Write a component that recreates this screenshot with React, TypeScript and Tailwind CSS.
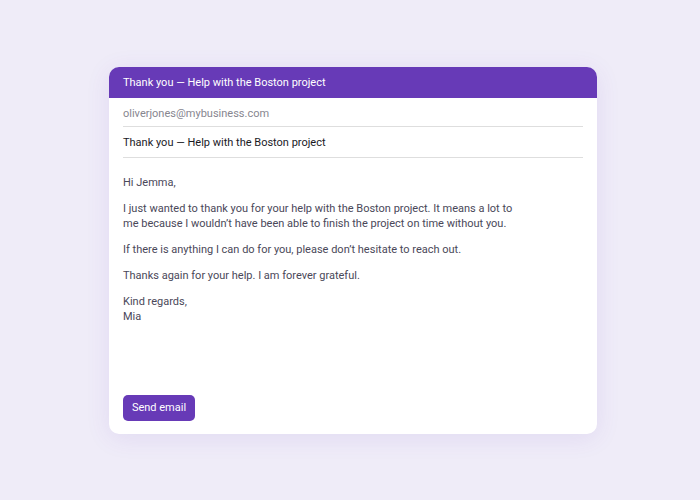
import React from 'react';

const paragraphs = [
  'Hi Jemma,',
  'I just wanted to thank you for your help with the Boston project. It means a lot to\nme because I wouldn\u2019t have been able to finish the project on time without you.',
  'If there is anything I can do for you, please don\u2019t hesitate to reach out.',
  'Thanks again for your help. I am forever grateful.',
  'Kind regards,\nMia',
];

export default function App() {
  return (
    <div
      className="flex h-[500px] w-[700px] items-start justify-center bg-[#efecf8] pt-[67px]"
      style={{ fontFamily: 'Roboto, "Noto Sans", sans-serif' }}
    >
      <div className="ml-[6px] flex h-[367px] w-[488px] flex-col overflow-hidden rounded-[10px] bg-white shadow-[0_4px_24px_rgba(103,58,183,0.10)]">
        <div className="flex h-[31px] items-center bg-[#673ab7] px-[14px] pt-[1px] text-[11px] text-white">
          Thank you — Help with the Boston project
        </div>
        <div className="flex flex-1 flex-col px-[14px] pb-[13px]">
          <div className="h-[29px] border-b border-[#dedede] pt-[8px] text-[11px] leading-[15px] text-[#87868f]">
            oliverjones@mybusiness.com
          </div>
          <div className="h-[31px] border-b border-[#dedede] pt-[8px] text-[11px] leading-[15px] text-[#1a1a1f]">
            Thank you — Help with the Boston project
          </div>
          <div className="flex flex-1 flex-col gap-[11px] pt-[17px] text-[11px] leading-[15px] text-[#4a4859]">
            {paragraphs.map((p, i) => (
              <p key={i} className="whitespace-pre-line">
                {p}
              </p>
            ))}
          </div>
          <div>
            <button className="h-[26px] w-[72px] rounded-[5px] bg-[#673ab7] text-[11px] text-white">
              Send email
            </button>
          </div>
        </div>
      </div>
    </div>
  );
}
